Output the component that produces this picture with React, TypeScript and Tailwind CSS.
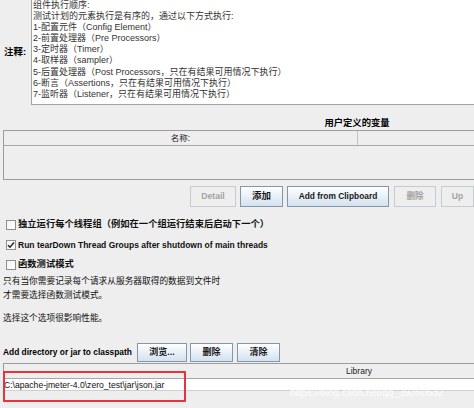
import React from "react";

const FONT = "font-['Liberation_Sans','Noto_Sans_CJK_SC',sans-serif]";

const NOTES = [
  "组件执行顺序:",
  "测试计划的元素执行是有序的，通过以下方式执行:",
  "1-配置元件（Config Element）",
  "2-前置处理器（Pre Processors）",
  "3-定时器（Timer）",
  "4-取样器（sampler）",
  "5-后置处理器（Post Processors，只在有结果可用情况下执行）",
  "6-断言（Assertions，只在有结果可用情况下执行）",
  "7-监听器（Listener，只在有结果可用情况下执行）",
];

function Btn({
  label,
  className = "",
  disabled = false,
}: {
  label: string;
  className?: string;
  disabled?: boolean;
}) {
  return (
    <div
      className={`flex items-center justify-center font-bold shrink-0 ${
        disabled
          ? "border border-[#c3cbd3] bg-[#eeeeee] text-[#a3a3a3]"
          : "border border-[#8596aa] bg-linear-to-b from-white to-[#d3e1ef] text-[#1a1a1a]"
      } ${className}`}
    >
      {label}
    </div>
  );
}

function Check({
  checked = false,
  label,
  size = "text-[9.3px]",
}: {
  checked?: boolean;
  label: string;
  size?: string;
}) {
  return (
    <div className="flex items-center pl-[6px] h-full">
      <div className="w-[10px] h-[10px] border border-[#8e8f8f] bg-linear-to-br from-[#f4f4f4] to-white flex items-center justify-center">
        {checked && (
          <svg width="8" height="8" viewBox="0 0 8 8">
            <path d="M1 4.2 L3 6.3 L7 1.5" fill="none" stroke="#222" strokeWidth="1.4" />
          </svg>
        )}
      </div>
      <span className={`ml-[2px] font-bold leading-none text-[#111] whitespace-nowrap ${size}`}>{label}</span>
    </div>
  );
}

export default function App() {
  return (
    <div className={`${FONT} relative w-[474px] h-[408px] overflow-hidden bg-[#eeeeee] text-black`}>
      <div className="w-[714px]">
        {/* comments */}
        <div className="flex h-[105px]">
          <div className="w-[31px] flex items-center pl-[4px] font-bold text-[9.5px]">注释:</div>
          <div className="flex-1 bg-white border-l border-b border-[#a3a3a3] pl-[1px] text-[9px] leading-[11.1px] text-[#333]">
            {NOTES.map((l) => (
              <div key={l} className="whitespace-nowrap">
                {l}
              </div>
            ))}
          </div>
        </div>

        {/* user defined variables */}
        <div className="h-[25px] pt-[13px] leading-[11px] text-center font-bold text-[9.3px]">用户定义的变量</div>
        <div className="ml-[3px] w-[711px] border-t border-l border-b border-[#9c9c9c]">
          <div className="flex h-[15px] border-b border-[#a8a8a8] text-[8.5px] leading-[15px] text-[#222]">
            <div className="w-[354px] text-center border-r border-[#c2c2c2]">名称:</div>
            <div className="flex-1" />
          </div>
          <div className="h-[33px]" />
        </div>

        <div className="flex mt-[6px] ml-[190px] h-[21px] gap-[4px] text-[8.6px]">
          <Btn label="Detail" disabled className="w-[46px]" />
          <Btn label="添加" className="w-[43px] text-[9.5px]" />
          <Btn label="Add from Clipboard" className="w-[102px] text-[8.4px]" />
          <Btn label="删除" disabled className="w-[42px] ml-[1px]" />
          <Btn label="Up" disabled className="w-[33px] ml-[1px]" />
        </div>

        {/* options */}
        <div className="mt-[8px] h-[20px]">
          <Check label="独立运行每个线程组（例如在一个组运行结束后启动下一个）" />
        </div>
        <div className="h-[20px]">
          <Check checked size="text-[8.5px]" label="Run tearDown Thread Groups after shutdown of main threads" />
        </div>
        <div className="mt-[1px] h-[18px]">
          <Check label="函数测试模式" />
        </div>
        <div className="pl-[3px] text-[8.7px] leading-[14px] text-[#111]">
          <div>只有当你需要记录每个请求从服务器取得的数据到文件时</div>
          <div>才需要选择函数测试模式。</div>
          <div className="mt-[9px]">选择这个选项很影响性能。</div>
        </div>

        {/* classpath */}
        <div className="flex items-center mt-[18px] h-[19px]">
          <span className="pl-[3px] w-[137px] font-bold text-[8.4px] whitespace-nowrap">Add directory or jar to classpath</span>
          <Btn label="浏览..." className="w-[50px] h-[19px] text-[9px]" />
          <Btn label="删除" className="w-[43px] h-[19px] ml-[3px] text-[9px]" />
          <Btn label="清除" className="w-[43px] h-[19px] ml-[4px] text-[9px]" />
        </div>
        <div className="mt-[1px] ml-[3px] w-[711px] border-t border-l border-[#9c9c9c]">
          <div className="h-[15px] border-b border-[#a8a8a8] text-center text-[8.5px] leading-[15px] text-[#222]">Library</div>
          <div className="h-[12px] bg-white border-b border-[#cfcfcf] text-[8.6px] leading-[12px] whitespace-nowrap text-[#111]">
            C:\apache-jmeter-4.0\zero_test\jar\json.jar
          </div>
        </div>
      </div>

      {/* annotation */}
      <div className="absolute left-[3px] top-[371px] w-[183px] h-[31px] border-2 border-[#e5343d]" />
      <div className="absolute left-[290px] top-[387px] text-[10px] leading-[12px] text-white/80 whitespace-nowrap">
        https://blog.csdn.net/qq_39350532
      </div>
    </div>
  );
}
